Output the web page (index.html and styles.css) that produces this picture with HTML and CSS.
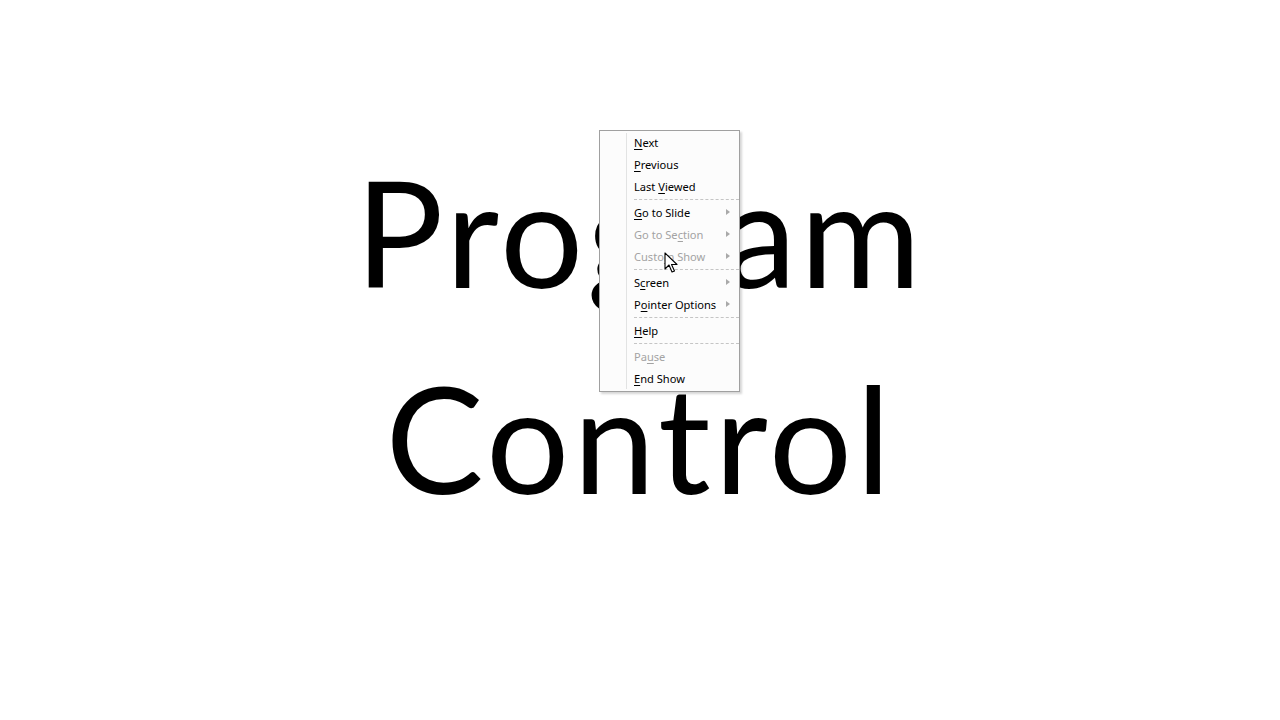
FILE: index.html
```html
<!DOCTYPE html>
<html>
<head>
<meta charset="utf-8">
<link rel="stylesheet" href="styles.css">
</head>
<body>
<div class="slide">
  <div class="title">
    <div class="line">Program</div>
    <div class="line">Control</div>
  </div>
</div>
<div class="menu">
  <div class="gutter"></div>
  <div class="item"><span class="label"><u>N</u>ext</span></div>
  <div class="item"><span class="label"><u>P</u>revious</span></div>
  <div class="item"><span class="label">Last <u>V</u>iewed</span></div>
  <div class="sep"></div>
  <div class="item"><span class="label"><u>G</u>o to Slide</span><span class="arrow"></span></div>
  <div class="item disabled"><span class="label">Go to Se<u>c</u>tion</span><span class="arrow"></span></div>
  <div class="item disabled"><span class="label">Custo<u>m</u> Show</span><span class="arrow"></span></div>
  <div class="sep"></div>
  <div class="item"><span class="label">S<u>c</u>reen</span><span class="arrow"></span></div>
  <div class="item"><span class="label">P<u>o</u>inter Options</span><span class="arrow"></span></div>
  <div class="sep"></div>
  <div class="item"><span class="label"><u>H</u>elp</span></div>
  <div class="sep"></div>
  <div class="item disabled"><span class="label">Pa<u>u</u>se</span></div>
  <div class="item"><span class="label"><u>E</u>nd Show</span></div>
</div>
<svg class="cursor" width="14" height="22" viewBox="0 0 14 22">
  <path d="M1 1 L1 17 L5 13 L8 20 L10.5 19 L7.5 12.5 L13 12.5 Z" fill="#fff" stroke="#000" stroke-width="1.1" stroke-linejoin="round"/>
</svg>
</body>
</html>
```
FILE: styles.css
```css
html, body {
  margin: 0;
  padding: 0;
  background: #fff;
}
.slide {
  width: 1280px;
  height: 720px;
  display: flex;
  justify-content: center;
  overflow: hidden;
}
.title {
  margin-top: 128px;
  font-family: "Lato", sans-serif;
  font-size: 147px;
  line-height: 206px;
  letter-spacing: 3.8px;
  color: #000;
  text-align: center;
}
.line {
  white-space: nowrap;
}
.menu {
  position: absolute;
  left: 599px;
  top: 130px;
  width: 139px;
  padding: 0 0 2px 0;
  background: #fcfcfc;
  border: 1px solid #a0a0a0;
  box-shadow: 2px 2px 2px rgba(0,0,0,0.16);
  font-family: "Segoe UI", "Noto Sans", "DejaVu Sans", sans-serif;
  font-size: 11.1px;
  color: #000;
}
.gutter {
  position: absolute;
  left: 26px;
  top: 2px;
  bottom: 2px;
  border-left: 1px solid #e2e3e3;
}
.item {
  height: 22px;
  display: flex;
  align-items: center;
  padding-left: 34px;
  padding-right: 9px;
}
.label {
  flex: 1;
  white-space: nowrap;
}
.item u {
  text-decoration-thickness: 1px;
  text-underline-offset: 2px;
}
.disabled {
  color: #a3a3a3;
}
.arrow {
  width: 0;
  height: 0;
  border-top: 3.5px solid transparent;
  border-bottom: 3.5px solid transparent;
  border-left: 4px solid #a9a9a9;
}
.sep {
  height: 0;
  margin: 2px 0 1px 34px;
  border-top: 1px dashed #c5c5c5;
}
.cursor {
  position: absolute;
  left: 664px;
  top: 252px;
}
```
